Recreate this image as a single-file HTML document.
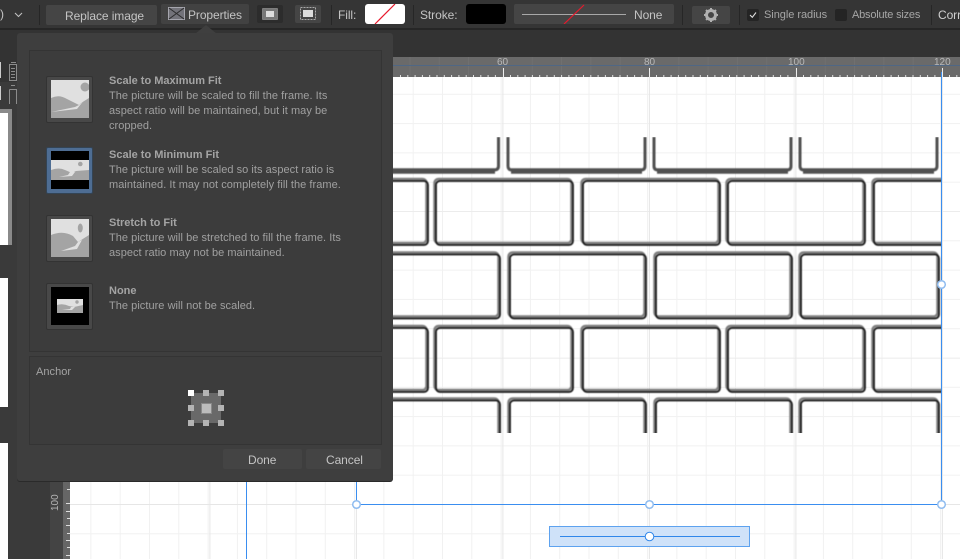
<!DOCTYPE html>
<html><head><meta charset="utf-8"><style>
html,body{margin:0;padding:0}
body{width:960px;height:559px;overflow:hidden;position:relative;background:#333;font-family:"Liberation Sans",sans-serif}
div,span{position:absolute;white-space:nowrap}
.tb{font-size:12px;color:#c4c4c4;line-height:16px;letter-spacing:-.08px}
.btn{background:#454545;border-radius:2px}
.sep{width:1px;background:#262626;top:5px;height:20px}
.t{font-size:11px;line-height:15px;left:109px;color:#a0a0a0;letter-spacing:.04px}
.t b{color:#a4a4a4;letter-spacing:0}
.thumb{left:46px;padding:0;background:#484848;border:1px solid #333;border-radius:2px;width:45px;height:45px}
.thumb svg{position:absolute;left:4px;top:3px}
.as{width:6px;height:6px;background:#b4b4b4}
</style></head><body>
<!-- left column -->
<div style="left:0;top:57px;width:50px;height:502px;background:#3a3a3a"></div>
<div style="left:0;top:57px;width:17px;height:25px;background:#333"></div>
<div style="left:0;top:109px;width:12px;height:136px;background:#8a8a8a"></div>
<div style="left:0;top:113px;width:8px;height:132px;background:#fff"></div>
<div style="left:0;top:278px;width:8px;height:129px;background:#fff"></div>
<div style="left:0;top:443px;width:8px;height:116px;background:#fff"></div>
<div style="left:0;top:62px;width:1px;height:16px;background:#ccc"></div>
<div style="left:0;top:86px;width:1px;height:14px;background:#ccc"></div>
<svg style="position:absolute;left:8px;top:60px" width="10" height="44" fill="none" stroke="#8c8c8c"><path d="M3 2.500H8M1.500 4.500H8.500V20.500H1.500ZM3 8.500H7M3 11.500H7M3 14.500H7M3 17.500H7"/><path d="M3 25.500H7M1.500 29.500H8.500V44M1.500 29.500V44"/></svg>
<!-- vertical ruler -->
<div style="left:50px;top:57px;width:13px;height:502px;background:#444"></div>
<div style="left:63px;top:57px;width:7px;height:502px;background:#666"></div>
<!-- canvas -->
<div style="left:70px;top:77px;width:890px;height:482px;background:#fff"></div>
<svg style="position:absolute;left:0;top:0" width="960" height="559">
<defs>
<clipPath id="c"><rect x="393" y="137" width="548" height="296"/></clipPath>
<pattern id="gr" x="61.1" y="64.500" width="29.300" height="29.300" patternUnits="userSpaceOnUse"><path d="M0.500 0V29.300M0 0.500H29.300" stroke="#f1f1f1" fill="none"/></pattern>
<pattern id="grM" x="62.900" y="64.500" width="146.500" height="146.500" patternUnits="userSpaceOnUse"><path d="M0.500 0V146.500M0 0.500H146.500" stroke="#e6e6e6" fill="none"/></pattern>
<g id="bricks">
<rect x="288" y="181" width="140" height="64" rx="4"/><rect x="436" y="181" width="137" height="64" rx="4"/><rect x="583" y="181" width="137" height="64" rx="4"/><rect x="728" y="181" width="137" height="64" rx="4"/><rect x="874" y="181" width="136" height="64" rx="4"/>
<rect x="360" y="254.500" width="140" height="64" rx="4"/><rect x="510" y="254.500" width="136" height="64" rx="4"/><rect x="656" y="254.500" width="136" height="64" rx="4"/><rect x="801" y="254.500" width="138" height="64" rx="4"/>
<rect x="288" y="328" width="140" height="64" rx="4"/><rect x="436" y="328" width="137" height="64" rx="4"/><rect x="583" y="328" width="137" height="64" rx="4"/><rect x="728" y="328" width="137" height="64" rx="4"/><rect x="874" y="328" width="136" height="64" rx="4"/>
<rect x="360" y="400.500" width="140" height="64" rx="4"/><rect x="510" y="400.500" width="136" height="64" rx="4"/><rect x="656" y="400.500" width="136" height="64" rx="4"/><rect x="801" y="400.500" width="138" height="64" rx="4"/>
</g>
</defs>
<rect x="70" y="77" width="890" height="482" fill="url(#gr)"/>
<rect x="70" y="77" width="890" height="482" fill="url(#grM)"/>
<g clip-path="url(#c)" fill="none" style="filter:blur(.4px)">
<use href="#bricks" stroke="#7f7f7f" stroke-width="2.500" x="-1.500" y="-2"/>
<use href="#bricks" stroke="#1c1c1c" stroke-width="1.800"/>
<g stroke="#505050" stroke-width="3">
<path d="M498.500 137V166Q498.500 170 494 170M508 137V166Q508 170 512 170M645 137V166Q645 170 641 170M654 137V166Q654 170 658 170M791 137V166Q791 170 787 170M800 137V166Q800 170 804 170M937 137V166Q937 170 933 170"/>
<path stroke-width="5.500" d="M361 171H495M511 171H642M657 171H788M803 171H934"/>
</g>
</g>
<!-- selection -->
<path d="M941.500 77V504.500H356.500V470M246.500 470V559" fill="none" stroke="#3a8ef0"/>
<rect x="549.500" y="526.500" width="200" height="20" fill="#cfe2f9" stroke="#5da2ef"/>
<path d="M560 536.500H740" stroke="#2f86ea"/>
<g fill="#fff" stroke="#8fbcf0" stroke-width="1.500"><circle cx="356.500" cy="504.500" r="3.800"/><circle cx="649.500" cy="504.500" r="3.800"/><circle cx="941.500" cy="504.500" r="3.800"/><circle cx="941.500" cy="284.500" r="3.800"/></g>
<circle cx="649.500" cy="536.500" r="4.300" fill="#fff" stroke="#2f86ea"/>
<!-- vertical ruler ticks -->
<path d="M66 503.500H70M67 489.500H70M67 518.500H70M67 533.500H70M67 547.500H70M65 481.500H70M66 511.500H70M66 525.500H70M66 540.500H70M66 555.500H70" stroke="#ddd"/>
</svg>
<div style="left:50px;font-size:10px;color:#b5b5b5;transform:rotate(-90deg);transform-origin:0 0;line-height:12px;top:511px">100</div>
<!-- horizontal ruler -->
<div style="left:393px;top:57px;width:567px;height:20px;background:#6a6a6a"></div>
<svg style="position:absolute;left:393px;top:57px" width="567" height="20">
<path d="M17 0V20M46.300 0V20M75.600 0V20M110 0V20M139.300 0V20M168.600 0V20M197.900 0V20M227.200 0V20M256.500 0V20M285.800 0V20M315.100 0V20M344.400 0V20M373.700 0V20M403 0V20M432.300 0V20M461.600 0V20M490.900 0V20M520.200 0V20M549.500 0V20" stroke="#707070"/>
<path d="M0 8.500H567" stroke="#4f6785"/>
<path d="M110.500 11V20M256.500 11V20M403.500 11V20M549.500 11V20" stroke="#eee"/>
<path d="M7.500 18V20M14.800 18V20M22.100 18V20M29.400 18V20M36.700 18V20M44 18V20M51.300 18V20M58.600 18V20M65.900 18V20M73.200 18V20M80.500 18V20M87.800 18V20M95.100 18V20M102.400 18V20M117.500 18V20M124.800 18V20M132.100 18V20M139.400 18V20M146.700 18V20M154 18V20M161.300 18V20M168.600 18V20M175.900 18V20M183.200 18V20M190.500 18V20M197.800 18V20M205.100 18V20M212.400 18V20M219.700 18V20M227 18V20M234.300 18V20M241.600 18V20M248.900 18V20M263.500 18V20M270.800 18V20M278.100 18V20M285.400 18V20M292.700 18V20M300 18V20M307.300 18V20M314.600 18V20M321.900 18V20M329.200 18V20M336.500 18V20M343.800 18V20M351.100 18V20M358.400 18V20M365.700 18V20M373 18V20M380.300 18V20M387.600 18V20M394.900 18V20M410.500 18V20M417.800 18V20M425.100 18V20M432.400 18V20M439.700 18V20M447 18V20M454.300 18V20M461.600 18V20M468.900 18V20M476.200 18V20M483.500 18V20M490.800 18V20M498.100 18V20M505.400 18V20M512.700 18V20M520 18V20M527.300 18V20M534.600 18V20M541.900 18V20M556.500 18V20M563.800 18V20" stroke="#e2e2e2"/>
<path d="M548.500 15V20" stroke="#3a8ef0"/>
</svg>
<div style="left:497px;top:57px;font-size:10px;color:#b8b8b8;line-height:12px">60</div>
<div style="left:644px;top:57px;font-size:10px;color:#b8b8b8;line-height:12px">80</div>
<div style="left:788px;top:57px;font-size:10px;color:#b8b8b8;line-height:12px">100</div>
<div style="left:934px;top:57px;font-size:10px;color:#b8b8b8;line-height:12px">120</div>
<!-- toolbar -->
<div style="left:0;top:0;width:960px;height:28px;background:#353535;border-bottom:2px solid #262626"></div>
<div class="tb" style="left:0;top:6px">)</div>
<svg style="position:absolute;left:14px;top:12px" width="9" height="6"><path d="M1 1L4.500 4.500L8 1" fill="none" stroke="#c0c0c0" stroke-width="1.100"/></svg>
<div class="sep" style="left:39px"></div>
<div class="btn" style="left:46px;top:5px;width:111px;height:20px"></div>
<div class="tb" style="left:65px;top:8px">Replace image</div>
<div class="btn" style="left:161px;top:4px;width:88px;height:20px;background:#424242"></div>
<svg style="position:absolute;left:168px;top:7px" width="17" height="13"><rect x=".5" y=".5" width="16" height="12" fill="#73737a" stroke="#a5a5ad"/><path d="M1 1L16 12M16 1L1 12" stroke="#2c2c2c"/></svg>
<div class="tb" style="left:188px;top:7px">Properties</div>
<div class="btn" style="left:257px;top:5px;width:26px;height:18px;background:#2c2c2c"></div>
<svg style="position:absolute;left:262px;top:8px" width="16" height="12"><rect x=".5" y=".5" width="15" height="11" fill="#777" stroke="#aaa" stroke-dasharray="1 1"/><rect x="4" y="3" width="8" height="6" fill="#ddd"/></svg>
<div class="btn" style="left:295px;top:5px;width:26px;height:18px"></div>
<svg style="position:absolute;left:300px;top:7px" width="16" height="13"><rect x=".5" y=".5" width="15" height="12" fill="none" stroke="#aaa" stroke-dasharray="2 1"/><rect x="3" y="3" width="10" height="7" fill="#ddd"/></svg>
<div class="sep" style="left:331px"></div>
<div class="tb" style="left:338px;top:7px">Fill:</div>
<div style="left:365px;top:4px;width:40px;height:20px;background:#fff;border-radius:3px;overflow:hidden"><svg width="40" height="20" style="display:block"><path d="M10 20L30 0" stroke="#e8192c" stroke-width="1.200"/></svg></div>
<div class="sep" style="left:413px"></div>
<div class="tb" style="left:420px;top:7px">Stroke:</div>
<div style="left:466px;top:4px;width:40px;height:20px;background:#000;border-radius:3px"></div>
<div class="btn" style="left:514px;top:4px;width:160px;height:20px"></div>
<svg style="position:absolute;left:514px;top:4px" width="160" height="20"><path d="M8 10.500H112" stroke="#a8a8a8"/><path d="M50 20L70 1" stroke="#e8192c" stroke-width="1.200"/></svg>
<div class="tb" style="left:634px;top:7px">None</div>
<div class="sep" style="left:682px"></div>
<div class="btn" style="left:692px;top:6px;width:38px;height:18px"></div>
<svg style="position:absolute;left:703px;top:7px" width="16" height="16"><circle cx="8" cy="8" r="4.500" fill="none" stroke="#b0b0b0" stroke-width="3"/><path d="M8 1V15M1 8H15M3 3L13 13M13 3L3 13" stroke="#b0b0b0" stroke-width="2" stroke-dasharray="2.500 9 2.500"/></svg>
<div class="sep" style="left:739px"></div>
<div style="left:747px;top:9px;width:12px;height:12px;background:#242424;border-radius:2px"></div>
<svg style="position:absolute;left:749px;top:11px" width="8" height="8"><path d="M1 4L3.300 6.300L7 1.500" fill="none" stroke="#ddd" stroke-width="1.100"/></svg>
<div class="tb" style="left:764px;top:7px;font-size:11px;color:#a6a6a6;letter-spacing:-.04px">Single radius</div>
<div style="left:835px;top:9px;width:12px;height:12px;background:#242424;border-radius:2px"></div>
<div class="tb" style="left:852px;top:7px;font-size:11px;color:#a6a6a6;letter-spacing:-.2px">Absolute sizes</div>
<div class="sep" style="left:931px"></div>
<div class="tb" style="left:938px;top:7px;color:#d0d0d0">Corr</div>
<!-- popup -->
<svg style="position:absolute;left:190px;top:24px" width="32" height="12"><path d="M5 10L16 1L27 10Z" fill="#3f3f3f"/></svg>
<div style="left:17px;top:33px;width:376px;height:448px;background:#3e3e3e;border-radius:3px;box-shadow:0 1px 0 #2a2a2a"></div>
<div style="left:29px;top:50px;width:351px;height:300px;background:#3c3c3c;border:1px solid #343434"></div>
<div style="left:29px;top:356px;width:351px;height:87px;background:#3c3c3c;border:1px solid #343434"></div>
<!-- thumbs -->
<div class="thumb" style="top:76px"><svg width="38" height="38"><rect width="38" height="38" fill="#e0e0e0"/><circle cx="34" cy="7" r="4.500" fill="#a4a4a4"/><path d="M0 18Q8 14 16 19L28 25L30 23L38 18V38H0Z" fill="#a4a4a4"/><path d="M28 25L32 21.500L26 29L0 32L24 27Z" fill="#e0e0e0"/></svg></div>
<div class="thumb" style="top:147px;background:#4e6d93;border-color:#345"><svg width="38" height="38"><rect width="38" height="38" fill="#000"/><rect y="9" width="38" height="20" fill="#e0e0e0"/><circle cx="29.300" cy="13" r="2.300" fill="#a4a4a4"/><path d="M0 19Q8 16 14 19L21 22L25 20L38 19V29H0Z" fill="#a4a4a4"/><path d="M19 21H24L21 25L8 26L17 24Z" fill="#e0e0e0"/></svg></div>
<div class="thumb" style="top:215px"><svg width="38" height="38"><rect width="38" height="38" fill="#e0e0e0"/><ellipse cx="29.300" cy="9" rx="2.500" ry="4.500" fill="#a4a4a4"/><path d="M0 16Q12 11 22 17L27 23L38 16V38H0Z" fill="#a4a4a4"/><path d="M27 23L31 21L26 30L10 32L24 27Z" fill="#e0e0e0"/></svg></div>
<div class="thumb" style="top:283px"><svg width="38" height="38"><rect width="38" height="38" fill="#000"/><rect x="6" y="12" width="26" height="14" fill="#e0e0e0"/><circle cx="26" cy="15" r="1.700" fill="#a4a4a4"/><path d="M6 18Q12 16 18 19L23 20L32 18V26H6Z" fill="#a4a4a4"/><path d="M20 20H24L21 23L11 23L19 22Z" fill="#e0e0e0"/></svg></div>
<!-- text -->
<div class="t" style="top:74px"><b>Scale to Maximum Fit</b><br>The picture will be scaled to fill the frame. Its<br>aspect ratio will be maintained, but it may be<br>cropped.</div>
<div class="t" style="top:148px"><b>Scale to Minimum Fit</b><br>The picture will be scaled so its aspect ratio is<br>maintained. It may not completely fill the frame.</div>
<div class="t" style="top:216px"><b>Stretch to Fit</b><br>The picture will be stretched to fill the frame. Its<br>aspect ratio may not be maintained.</div>
<div class="t" style="top:284px"><b>None</b><br>The picture will not be scaled.</div>
<div class="t" style="left:36px;top:365px;color:#a4a4a4">Anchor</div>
<!-- anchor -->
<div style="left:191px;top:393px;width:30px;height:30px;background:#696969"></div>
<div style="left:201px;top:403px;width:9px;height:9px;background:#bcbcbc;border:1px solid #888"></div>
<div class="as" style="left:188px;top:390px;background:#fff"></div><div class="as" style="left:203px;top:390px"></div><div class="as" style="left:218px;top:390px"></div>
<div class="as" style="left:188px;top:405px"></div><div class="as" style="left:218px;top:405px"></div>
<div class="as" style="left:188px;top:420px"></div><div class="as" style="left:203px;top:420px"></div><div class="as" style="left:218px;top:420px"></div>
<!-- buttons -->
<div style="left:223px;top:449px;width:79px;height:20px;background:#444;border-radius:2px"></div>
<div style="left:306px;top:449px;width:75px;height:20px;background:#444;border-radius:2px"></div>
<div class="tb" style="left:248px;top:452px">Done</div>
<div class="tb" style="left:326px;top:452px">Cancel</div>
</body></html>
